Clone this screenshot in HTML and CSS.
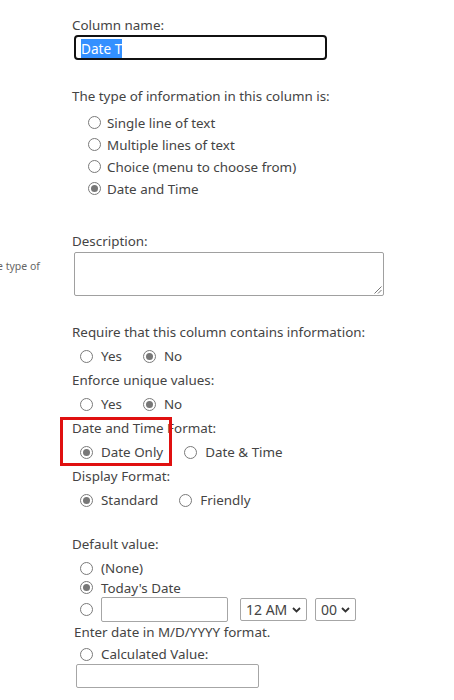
FILE: index.html
```html
<!DOCTYPE html>
<html lang="en">
<head>
<meta charset="utf-8">
<title>Column settings</title>
<link rel="stylesheet" href="styles.css">
</head>
<body>
<div class="page">

  <div class="section s-name">
    <div class="side"></div>
    <div class="main">
      <div class="label l20">Column name:</div>
      <div class="text-input name-input"><span class="selected">Date T</span></div>
    </div>
  </div>

  <div class="section s-type">
    <div class="side"></div>
    <div class="main">
      <div class="label l22">The type of information in this column is:</div>
      <div class="type-list">
        <div class="opt type-opt"><span class="radio"></span><span>Single line of text</span></div>
        <div class="opt type-opt"><span class="radio"></span><span>Multiple lines of text</span></div>
        <div class="opt type-opt"><span class="radio"></span><span>Choice (menu to choose from)</span></div>
        <div class="opt type-opt"><span class="radio checked"></span><span>Date and Time</span></div>
      </div>
    </div>
  </div>

  <div class="section s-desc">
    <div class="side"><div class="side-note">e type of</div></div>
    <div class="main">
      <div class="label l22">Description:</div>
      <div class="textarea"><svg class="grip" width="9" height="9" viewBox="0 0 9 9"><path d="M8.5 1.5 L1.5 8.5 M8.5 5 L5 8.5" stroke="#777" stroke-width="1" fill="none"/></svg></div>
    </div>
  </div>

  <div class="section s-opts">
    <div class="side"></div>
    <div class="main">
      <div class="label l24">Require that this column contains information:</div>
      <div class="inline-row l24">
        <div class="opt"><span class="radio"></span><span>Yes</span></div>
        <div class="opt"><span class="radio checked"></span><span>No</span></div>
      </div>
      <div class="label l24">Enforce unique values:</div>
      <div class="inline-row l24">
        <div class="opt"><span class="radio"></span><span>Yes</span></div>
        <div class="opt"><span class="radio checked"></span><span>No</span></div>
      </div>
      <div class="label l24">Date and Time Format:</div>
      <div class="inline-row l24">
        <div class="opt"><span class="radio checked"></span><span>Date Only</span></div>
        <div class="opt"><span class="radio"></span><span>Date &amp; Time</span></div>
      </div>
      <div class="label l24">Display Format:</div>
      <div class="inline-row l24">
        <div class="opt"><span class="radio checked"></span><span>Standard</span></div>
        <div class="opt"><span class="radio"></span><span>Friendly</span></div>
      </div>
      <div class="highlight-box"></div>
    </div>
  </div>

  <div class="section s-default">
    <div class="side"></div>
    <div class="main">
      <div class="label l24">Default value:</div>
      <div class="opt def-opt r-none"><span class="radio"></span><span>(None)</span></div>
      <div class="opt def-opt r-today"><span class="radio checked"></span><span>Today's Date</span></div>
      <div class="opt def-opt r-date">
        <span class="radio"></span>
        <div class="text-input date-input"></div>
        <div class="select sel-hour"><span>12 AM</span><svg width="9" height="6" viewBox="0 0 9 6"><path d="M1 1 L4.5 4.5 L8 1" stroke="#333" stroke-width="1.8" fill="none"/></svg></div>
        <div class="select sel-min"><span>00</span><svg width="9" height="6" viewBox="0 0 9 6"><path d="M1 1 L4.5 4.5 L8 1" stroke="#333" stroke-width="1.8" fill="none"/></svg></div>
      </div>
      <div class="hint">Enter date in M/D/YYYY format.</div>
      <div class="opt def-opt r-calc"><span class="radio"></span><span>Calculated Value:</span></div>
      <div class="text-input calc-input"></div>
    </div>
  </div>

</div>
</body>
</html>
```

FILE: styles.css
```css
* { box-sizing: border-box; }

html, body {
  margin: 0;
  padding: 0;
  background: #ffffff;
}

body {
  font-family: "Noto Sans", "Open Sans", sans-serif;
  font-size: 13.4px;
  color: #444444;
  width: 454px;
  height: 700px;
  overflow: hidden;
}

.page {
  padding-top: 15px;
}

.section {
  display: grid;
  grid-template-columns: 72px 1fr;
}

.main {
  position: relative;
  display: flex;
  flex-direction: column;
  align-items: flex-start;
}

.side {
  overflow: hidden;
}

.label { white-space: nowrap; }
.l20 { line-height: 20px; }
.l22 { line-height: 22px; }
.l24 { line-height: 24px; }

/* radio */
.radio {
  flex: none;
  position: relative;
  width: 13px;
  height: 13px;
  border: 1px solid #7a7a7a;
  border-radius: 50%;
  background: #fff;
}
.radio.checked::after {
  content: "";
  position: absolute;
  left: 2px;
  top: 2px;
  width: 7px;
  height: 7px;
  border-radius: 50%;
  background: #777777;
}

.opt {
  display: flex;
  align-items: center;
  white-space: nowrap;
}

/* column name */
.text-input {
  background: #fff;
  border: 1px solid #a6a6a6;
  border-radius: 2px;
}
.name-input {
  margin-left: 2px;
  width: 253px;
  height: 25px;
  border: 2px solid #111;
  border-radius: 4px;
  padding: 1px 0 0 5px;
  display: flex;
  align-items: center;
}
.selected {
  background: #3390ff;
  color: #fff;
  line-height: 19px;
  font-size: 13.6px;
}

/* type */
.s-type { margin-top: 25px; }
.type-list {
  margin-top: 4.5px;
  display: flex;
  flex-direction: column;
}
.type-opt {
  height: 22px;
  margin-left: 16px;
  gap: 6px;
}

/* description */
.s-desc { margin-top: 30.5px; }
.side-note {
  margin-top: 29px;
  margin-left: -3px;
  font-size: 10.5px;
  line-height: 14px;
  color: #666;
  white-space: nowrap;
}
.textarea {
  position: relative;
  margin-left: 2px;
  width: 310px;
  height: 44px;
  border: 1px solid #a0a0a0;
  border-radius: 2px;
}
.grip {
  position: absolute;
  right: 1px;
  bottom: 1px;
}

/* options */
.s-opts { margin-top: 24px; }
.inline-row {
  display: flex;
  align-items: center;
  height: 24px;
  margin-left: 8px;
  gap: 21px;
}
.inline-row .opt { gap: 8px; }

.highlight-box {
  position: absolute;
  left: -12px;
  top: 97px;
  width: 112px;
  height: 49px;
  border: 3px solid #e01010;
}

/* default value */
.s-default { margin-top: 19.5px; }
.def-opt {
  margin-left: 8px;
  gap: 8px;
}
.r-none { margin-top: 2.5px; height: 20px; }
.r-today { height: 19px; }
.r-date { height: 25px; }
.date-input {
  width: 127px;
  height: 25px;
}
.select {
  display: flex;
  align-items: center;
  justify-content: space-between;
  height: 23px;
  border: 1px solid #a6a6a6;
  border-radius: 2px;
  padding: 0 5px 0 5px;
  font-size: 14px;
  color: #444;
  background: #fff;
}
.sel-hour { width: 67px; margin-left: 4px; }
.sel-min { width: 41px; }
.hint {
  margin-left: 2px;
  line-height: 20px;
  white-space: nowrap;
}
.r-calc { margin-top: 2px; height: 20px; }
.calc-input {
  margin-left: 4px;
  width: 183px;
  height: 24px;
}
```
